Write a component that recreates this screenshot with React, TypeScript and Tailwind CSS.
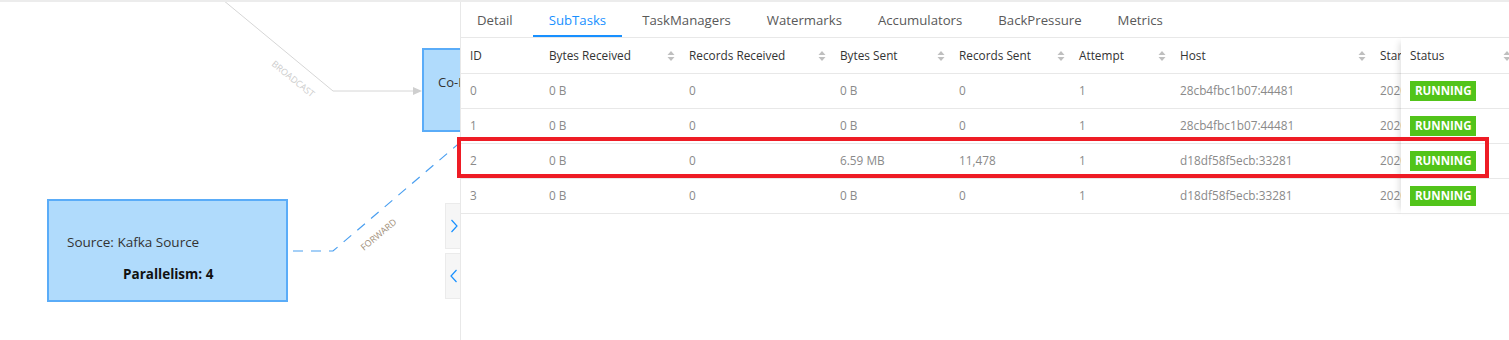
import React from "react";

type Col = { key: string; title: string; width: string; sorter?: boolean };

const cols: Col[] = [
  { key: "id", title: "ID", width: "w-[79px]" },
  { key: "br", title: "Bytes Received", width: "w-[140px]", sorter: true },
  { key: "rr", title: "Records Received", width: "w-[151px]", sorter: true },
  { key: "bs", title: "Bytes Sent", width: "w-[119px]", sorter: true },
  { key: "rs", title: "Records Sent", width: "w-[120px]", sorter: true },
  { key: "at", title: "Attempt", width: "w-[101px]", sorter: true },
  { key: "host", title: "Host", width: "w-[200px]", sorter: true },
  { key: "start", title: "Start Time", width: "w-[200px]", sorter: true },
];

const rows: Record<string, string>[] = [
  { id: "0", br: "0 B", rr: "0", bs: "0 B", rs: "0", at: "1", host: "28cb4fbc1b07:44481", start: "2020-05-12 10:21:33" },
  { id: "1", br: "0 B", rr: "0", bs: "0 B", rs: "0", at: "1", host: "28cb4fbc1b07:44481", start: "2020-05-12 10:21:33" },
  { id: "2", br: "0 B", rr: "0", bs: "6.59 MB", rs: "11,478", at: "1", host: "d18df58f5ecb:33281", start: "2020-05-12 10:21:33" },
  { id: "3", br: "0 B", rr: "0", bs: "0 B", rs: "0", at: "1", host: "d18df58f5ecb:33281", start: "2020-05-12 10:21:33" },
];

const tabs = ["Detail", "SubTasks", "TaskManagers", "Watermarks", "Accumulators", "BackPressure", "Metrics"];

function Sorter() {
  return (
    <svg width="8" height="12" viewBox="0 0 8 12" className="shrink-0" aria-hidden>
      <path d="M4 1 L7.5 5 H0.5 Z" fill="#bfbfbf" />
      <path d="M4 11 L7.5 7 H0.5 Z" fill="#bfbfbf" />
    </svg>
  );
}

function Graph() {
  return (
    <div className="relative w-[460px] h-full shrink-0 overflow-hidden">
      <svg width="460" height="340" className="absolute left-0 top-[-2px]" aria-hidden>
        {/* broadcast edge */}
        <path d="M223 0 L333 91 L414 91" stroke="#d6d6d6" strokeWidth="1" fill="none" />
        <path d="M413 87 L422 91 L413 95 Z" fill="#cfcfcf" />
        <text
          x="0"
          y="0"
          fontSize="9"
          fill="#cdcdcd"
          fontFamily="'Open Sans', sans-serif"
          transform="translate(271 65) rotate(39)"
        >
          BROADCAST
        </text>
        {/* forward edge */}
        <path
          d="M293 251 L333 251 L470 134"
          stroke="#4a9ff0"
          strokeWidth="1.2"
          strokeDasharray="10 8"
          fill="none"
        />
        <text
          x="0"
          y="0"
          fontSize="9"
          fill="#a08e78"
          fontFamily="'Open Sans', sans-serif"
          transform="translate(364 251) rotate(-40)"
        >
          FORWARD
        </text>
      </svg>

      {/* Co- node, clipped by the drawer */}
      <div className="absolute left-[422px] top-[46px] w-[200px] h-[84px] bg-[#b0dbfc] border-2 border-[#5aacf8] flex items-center pl-[14px] pb-[14px] text-[13px] text-[#333]">
        Co-Flat Map
      </div>

      {/* Source node */}
      <div className="absolute left-[47px] top-[197px] w-[241px] h-[103px] bg-[#b0dbfc] border-2 border-[#5aacf8] text-[13.5px] text-[#333]">
        <div className="pl-[18px] pt-[32px] leading-[18px]">Source: Kafka Source</div>
        <div className="pl-[74px] pt-[14px] leading-[18px] font-bold text-[#111]">Parallelism: 4</div>
      </div>

      {/* collapse buttons */}
      <div className="absolute left-[445px] top-[201px] flex flex-col gap-[4px]">
        <div className="w-[16px] h-[46px] bg-[#f6f6f6] border border-[#ebebeb] border-r-0 flex items-center justify-center">
          <svg width="8" height="14" viewBox="0 0 8 14" aria-hidden>
            <path d="M1.5 1 L7 7 L1.5 13" stroke="#1890ff" strokeWidth="1.2" fill="none" />
          </svg>
        </div>
        <div className="w-[16px] h-[46px] bg-[#f6f6f6] border border-[#ebebeb] border-r-0 flex items-center justify-center">
          <svg width="8" height="14" viewBox="0 0 8 14" aria-hidden>
            <path d="M6.5 1 L1 7 L6.5 13" stroke="#1890ff" strokeWidth="1.2" fill="none" />
          </svg>
        </div>
      </div>
    </div>
  );
}

function Drawer() {
  return (
    <div className="relative flex-1 h-full border-l border-[#e8e8e8] bg-white overflow-hidden">
      {/* tabs */}
      <div className="flex h-[36px] border-b border-[#e8e8e8] gap-[4px]">
        {tabs.map((t) => (
          <div
            key={t}
            className={[
              "px-4 h-full flex items-center text-[13.2px] pt-[3px]",
              t === "SubTasks"
                ? "text-[#1890ff] border-b-2 border-[#1890ff] mb-[-1px] pt-[4px]"
                : "text-[#595959]",
            ].join(" ")}
          >
            {t}
          </div>
        ))}
      </div>

      {/* table */}
      <div className="relative text-[11.8px] pt-[1px]">
        <div className="flex h-[35px] border-b border-[#e8e8e8] text-[#333] w-max">
          {cols.map((c) => (
            <div key={c.key} className={[c.width, "shrink-0 flex items-center justify-between pl-[9px] pr-[5px]"].join(" ")}>
              <span>{c.title}</span>
              {c.sorter && <Sorter />}
            </div>
          ))}
        </div>
        {rows.map((r) => (
          <div key={r.id} className="flex h-[35px] border-b border-[#e8e8e8] text-[#8a8a8a] w-max">
            {cols.map((c) => (
              <div key={c.key} className={[c.width, "shrink-0 flex items-center pl-[9px] whitespace-nowrap"].join(" ")}>
                {r[c.key]}
              </div>
            ))}
          </div>
        ))}

        {/* fixed status column */}
        <div className="absolute left-[940px] top-0 w-[130px] pt-[1px] bg-white shadow-[-6px_0_6px_-4px_rgba(0,0,0,0.12)]">
          <div className="flex h-[35px] border-b border-[#e8e8e8] items-center justify-between pl-[9px] pr-[20px] text-[#333]">
            <span>Status</span>
            <Sorter />
          </div>
          {rows.map((r) => (
            <div key={r.id} className="flex h-[35px] border-b border-[#e8e8e8] items-center pl-[9px]">
              <span className="bg-[#52c41a] text-white font-bold text-[11.5px] h-[20px] px-[5px] flex items-center leading-none">
                RUNNING
              </span>
            </div>
          ))}
        </div>
      </div>
    </div>
  );
}

export default function App() {
  return (
    <div
      className="relative w-[1509px] h-[340px] bg-white border-t-2 border-[#ececec] flex overflow-hidden"
      style={{ fontFamily: "'Open Sans', 'Noto Sans', sans-serif" }}
    >
      <Graph />
      <Drawer />

      {/* highlight box drawn over the table */}
      <div className="absolute left-[457px] top-[135px] w-[1032px] h-[41px] border-4 border-[#ee1c25]" />
    </div>
  );
}
